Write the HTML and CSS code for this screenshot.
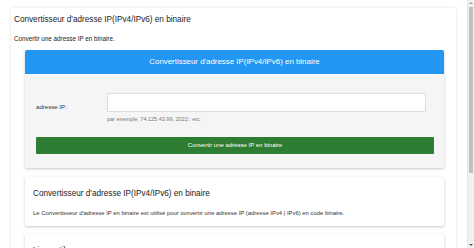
FILE: index.html
```html
<!DOCTYPE html>
<html lang="fr">
<head>
<meta charset="utf-8">
<title>Convertisseur d'adresse IP en binaire</title>
<link rel="stylesheet" href="styles.css">
</head>
<body>
<main class="page">
  <div class="panel">
    <h1 class="title">Convertisseur d'adresse IP(IPv4/IPv6) en binaire</h1>
    <p class="subtitle">Convertir une adresse IP en binaire.</p>

    <section class="card tool">
      <div class="tool-head">Convertisseur d'adresse IP(IPv4/IPv6) en binaire</div>
      <div class="tool-body">
        <div class="form-row">
          <label class="label" for="ip">adresse IP:</label>
          <div class="field">
            <input id="ip" class="input" type="text">
            <div class="hint">par exemple, 74.125.43.99, 2022:: etc</div>
          </div>
        </div>
        <button class="btn" type="button">Convertir une adresse IP en binaire</button>
      </div>
    </section>

    <section class="card info">
      <h2 class="card-title">Convertisseur d'adresse IP(IPv4/IPv6) en binaire</h2>
      <p class="card-text">Le Convertisseur d'adresse IP en binaire est utilisé pour convertir une adresse IP (adresse IPv4 | IPv6) en code binaire.</p>
    </section>

    <section class="card info">
      <h2 class="card-title">Liens utiles</h2>
      <p class="card-text">Autres outils de conversion d'adresse IP.</p>
    </section>
  </div>
</main>
<div class="scrollbar" aria-hidden="true">
  <div class="arrow up"></div>
  <div class="thumb"></div>
  <div class="track"></div>
  <div class="arrow down"></div>
</div>
</body>
</html>
```

FILE: styles.css
```css
html, body {
  margin: 0;
  padding: 0;
  height: 100%;
  overflow: hidden;
  background: #fff;
}

body {
  display: flex;
  font-family: "Liberation Sans", Arial, sans-serif;
  color: #222;
}

.page {
  flex: 1;
  min-width: 0;
  padding: 8px 11px 0 11px;
}

.panel {
  background: #fff;
  box-shadow: 0 0 3px rgba(0, 0, 0, 0.12);
  padding: 7px 12px 20px 3px;
}

.title {
  margin: 0;
  font-size: 8.2px;
  line-height: 10px;
  font-weight: normal;
  color: #222;
}

.subtitle {
  margin: 10px 0 0 0;
  font-size: 6.3px;
  line-height: 8px;
  color: #222;
}

.card {
  margin-left: 11px;
  border-radius: 2px;
  box-shadow: 0 1px 3px rgba(0, 0, 0, 0.22);
}

.tool {
  margin-top: 7px;
  background: #f5f5f5;
}

.tool-head {
  height: 24px;
  line-height: 24px;
  background: #2196f3;
  color: #fff;
  text-align: center;
  font-size: 7.9px;
  border-radius: 2px 2px 0 0;
}

.tool-body {
  padding: 19px 10px 14px 11px;
}

.form-row {
  display: flex;
}

.label {
  width: 71px;
  margin-top: 10px;
  font-size: 6.1px;
  line-height: 8px;
  color: #333;
}

.field {
  width: 319px;
}

.input {
  display: block;
  box-sizing: border-box;
  width: 100%;
  height: 19px;
  margin: 0;
  border: 1px solid #dcdcdc;
  border-radius: 1px;
  background: #fff;
}

.hint {
  margin-top: 4px;
  font-size: 5.5px;
  line-height: 7px;
  color: #777;
}

.btn {
  display: block;
  width: 100%;
  height: 17px;
  margin-top: 14px;
  padding: 0;
  border: 0;
  border-radius: 1px;
  background: #2f7d32;
  color: #fff;
  font-family: "Liberation Sans", Arial, sans-serif;
  font-size: 6px;
  line-height: 17px;
}

.info {
  background: #fff;
  padding: 12px 8px 9px 8px;
}

.tool + .info {
  margin-top: 9px;
}

.info + .info {
  margin-top: 8px;
}

.card-title {
  margin: 0;
  font-size: 8.2px;
  line-height: 10px;
  font-weight: normal;
  color: #222;
}

.card-text {
  margin: 11px 0 0 0;
  font-size: 5.9px;
  line-height: 7px;
  color: #333;
}

.scrollbar {
  width: 7px;
  flex: none;
  display: flex;
  flex-direction: column;
  background: #f1f1f1;
  border-left: 1px solid #e6e6e6;
  box-sizing: border-box;
}

.arrow {
  height: 6px;
  flex: none;
  display: flex;
  align-items: center;
  justify-content: center;
}

.arrow.up::before,
.arrow.down::before {
  content: "";
  border-left: 2px solid transparent;
  border-right: 2px solid transparent;
}

.arrow.up::before {
  border-bottom: 2px solid #a3a3a3;
}

.arrow.down::before {
  border-top: 2px solid #505050;
}

.thumb {
  height: 166px;
  margin: 1px 1px 0 1px;
  background: #c1c1c1;
}

.track {
  flex: 1;
}
```
